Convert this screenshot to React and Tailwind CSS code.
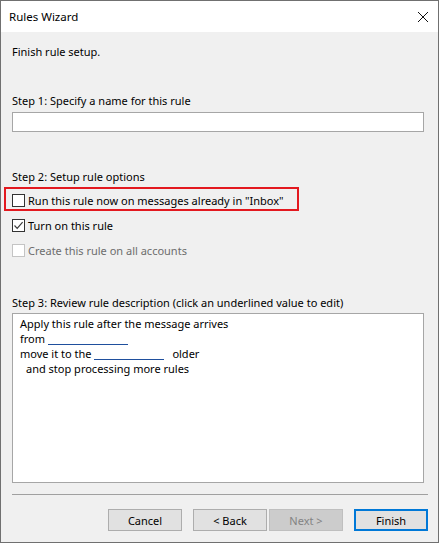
import React from 'react';

const font = { fontFamily: '"Noto Sans", "Open Sans", sans-serif' };

const Box = ({ checked, disabled }) => (
  <span
    className={`flex h-[13px] w-[13px] shrink-0 items-center justify-center border bg-white ${
      disabled ? 'border-[#c4c4c4]' : 'border-[#333333]'
    }`}
  >
    {checked && (
      <svg width="11" height="11" viewBox="0 0 11 11">
        <path d="M1.5 5.5 L4.2 8.3 L9.6 2.2" fill="none" stroke="#3c3c3c" strokeWidth="1.2" />
      </svg>
    )}
  </span>
);

const Option = ({ label, checked, disabled }) => (
  <div className="flex h-[15px] items-center gap-[3px]">
    <Box checked={checked} disabled={disabled} />
    <span className={disabled ? 'text-[#6d6d6d]' : 'text-black'}>{label}</span>
  </div>
);

const Btn = ({ children, primary, disabled }) => (
  <div
    className={`flex h-[22px] w-[74px] items-center justify-center ${
      primary
        ? 'border-2 border-[#0078d7] bg-[#e1e1e1] text-black'
        : disabled
        ? 'border border-[#bfbfbf] bg-[#cccccc] text-[#838383]'
        : 'border border-[#adadad] bg-[#e1e1e1] text-black'
    }`}
  >
    {children}
  </div>
);

const Blank = ({ w }) => (
  <span className={`inline-block h-[1px] bg-[#1f4f9d] align-[-2px] ${w}`} />
);

export default function App() {
  return (
    <div
      className="flex h-[543px] w-[439px] flex-col overflow-hidden border border-[#707070] bg-[#f0f0f0] text-[11px] leading-[15px] text-black"
      style={font}
    >
      <div className="flex h-[31px] shrink-0 items-center justify-between bg-white pl-[8px] pr-[9px]">
        <span className="text-[11.5px]">Rules Wizard</span>
        <svg width="12" height="12" viewBox="0 0 12 12">
          <path d="M1 1 L11 11 M11 1 L1 11" stroke="#111" strokeWidth="1" />
        </svg>
      </div>

      <div className="flex flex-1 flex-col pl-[11px] pr-[10px]">
        <div className="mt-[12px]">Finish rule setup.</div>

        <div className="mt-[34px]">Step 1: Specify a name for this rule</div>
        <div className="mr-[4px] mt-[4px] h-[20px] border border-[#a6a6a6] bg-white" />

        <div className="mt-[37px]">Step 2: Setup rule options</div>
        <div className="relative mt-[9px]">
          <Option label={'Run this rule now on messages already in "Inbox"'} />
          <div className="pointer-events-none absolute left-[-8px] top-[-6px] h-[24px] w-[295px] border-2 border-[#e3191f]" />
        </div>
        <div className="mt-[10px]">
          <Option label="Turn on this rule" checked />
        </div>
        <div className="mt-[10px]">
          <Option label="Create this rule on all accounts" disabled />
        </div>

        <div className="mt-[37px]">Step 3: Review rule description (click an underlined value to edit)</div>
        <div className="mr-[4px] mt-[3px] h-[170px] border border-[#a6a6a6] bg-white pl-[7px] pt-[2px]">
          <div className="h-[15px]">Apply this rule after the message arrives</div>
          <div className="h-[15px]">
            from <Blank w="w-[80px]" />
          </div>
          <div className="h-[15px]">
            move it to the <Blank w="w-[70px]" />
            <span className="ml-[8px]">older</span>
          </div>
          <div className="h-[15px] pl-[6px]">and stop processing more rules</div>
        </div>

        <div className="mt-[11px] h-[2px] border-t border-[#a0a0a0] border-b-white" />

        <div className="mt-[13px] flex justify-end gap-[11px]">
          <Btn>Cancel</Btn>
          <div className="flex gap-[2px]">
            <Btn>&lt; Back</Btn>
            <Btn disabled>Next &gt;</Btn>
          </div>
          <Btn primary>Finish</Btn>
        </div>
      </div>
    </div>
  );
}
